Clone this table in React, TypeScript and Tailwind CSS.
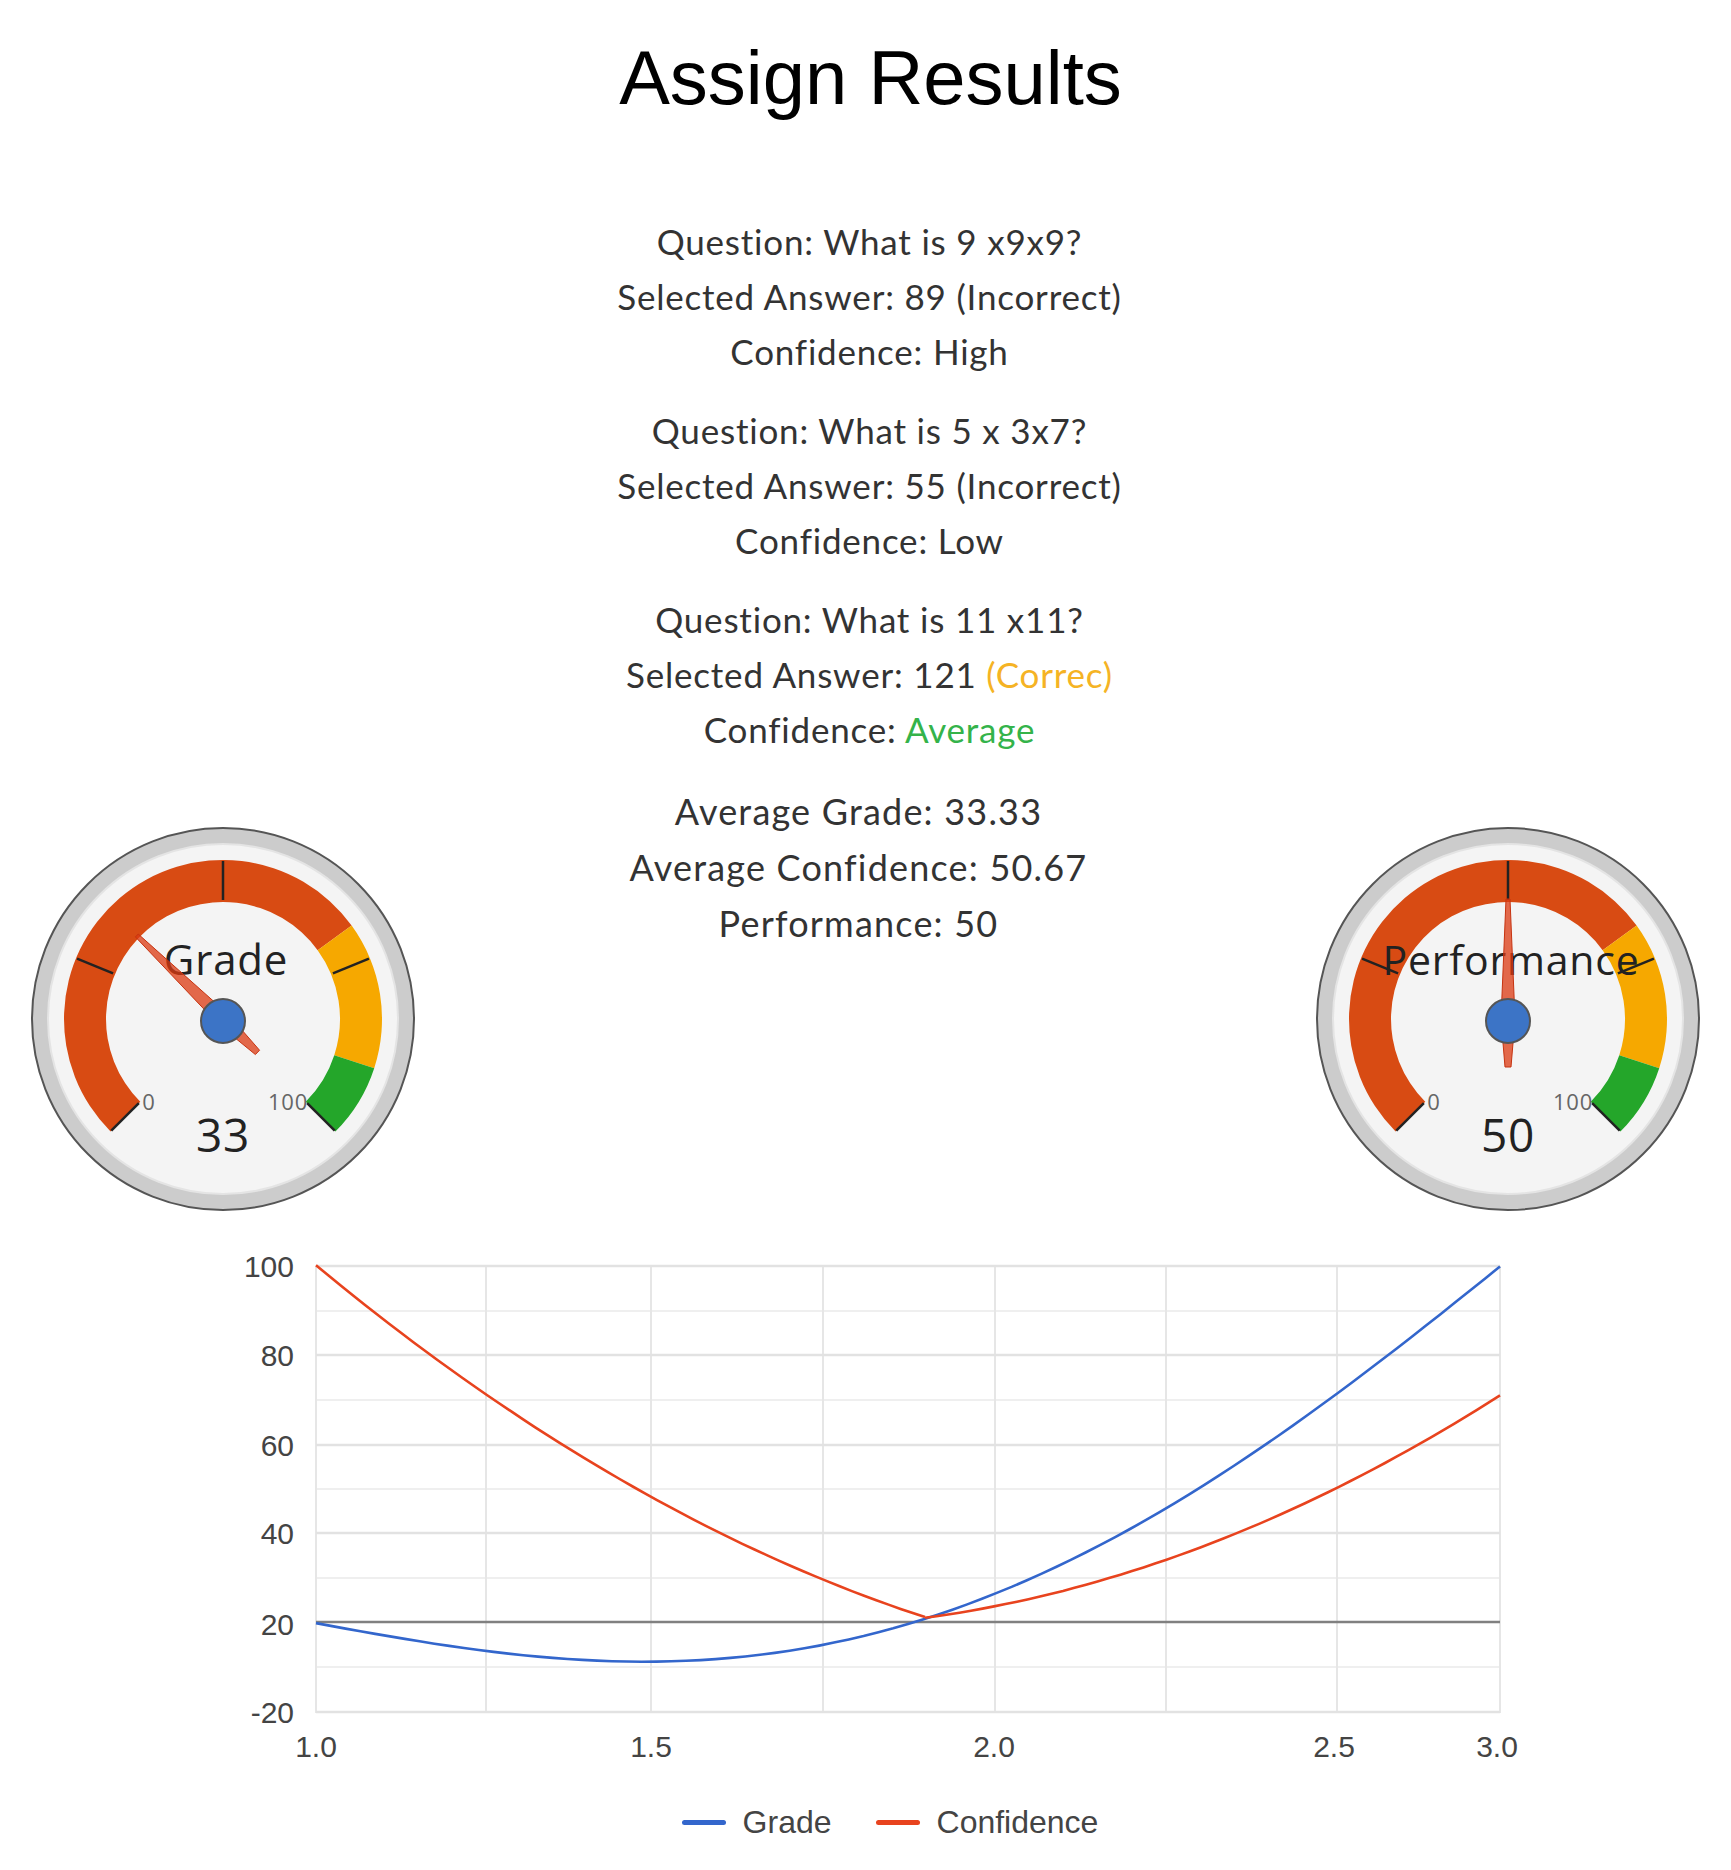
import React from "react";

type Pt = [number, number];

// least-squares polynomial fit, returns sampled path
function fitPath(pts: Pt[], deg: number, x0: number, x1: number, n = 80): string {
  const m = deg + 1;
  const sx = 1000;
  const A: number[][] = Array.from({ length: m }, () => Array(m + 1).fill(0));
  for (const [xr, y] of pts) {
    const x = xr / sx;
    for (let i = 0; i < m; i++) {
      for (let j = 0; j < m; j++) A[i][j] += Math.pow(x, i + j);
      A[i][m] += y * Math.pow(x, i);
    }
  }
  for (let c = 0; c < m; c++) {
    let piv = c;
    for (let r = c + 1; r < m; r++) if (Math.abs(A[r][c]) > Math.abs(A[piv][c])) piv = r;
    [A[c], A[piv]] = [A[piv], A[c]];
    for (let r = 0; r < m; r++) {
      if (r === c) continue;
      const f = A[r][c] / A[c][c];
      for (let k = c; k <= m; k++) A[r][k] -= f * A[c][k];
    }
  }
  const coef = A.map((row, i) => row[m] / row[i]);
  const f = (xr: number) => coef.reduce((s, c, i) => s + c * Math.pow(xr / sx, i), 0);
  let d = "";
  for (let i = 0; i <= n; i++) {
    const x = x0 + ((x1 - x0) * i) / n;
    d += (i === 0 ? "M" : " L") + x.toFixed(1) + "," + f(x).toFixed(1);
  }
  return d;
}

const C = 200;
function polar(angDeg: number, r: number): Pt {
  const a = (angDeg * Math.PI) / 180;
  return [C + r * Math.sin(a), C - r * Math.cos(a)];
}
function sector(a0: number, a1: number, r0: number, r1: number): string {
  const large = a1 - a0 > 180 ? 1 : 0;
  const o0 = polar(a0, r1);
  const o1 = polar(a1, r1);
  const i1 = polar(a1, r0);
  const i0 = polar(a0, r0);
  return `M${o0[0]},${o0[1]} A${r1},${r1} 0 ${large} 1 ${o1[0]},${o1[1]} L${i1[0]},${i1[1]} A${r0},${r0} 0 ${large} 0 ${i0[0]},${i0[1]} Z`;
}
const valToAng = (v: number) => -135 + v * 2.7;

function Gauge({ label, value }: { label: string; value: number }) {
  const th = valToAng(value);
  const local: Pt[] = [
    [-2, -120],
    [2, -120],
    [7, 0],
    [3, 48],
    [-3, 48],
    [-7, 0],
  ];
  const a = (th * Math.PI) / 180;
  const rot = local.map(([x, y]) => [
    C + x * Math.cos(a) - y * Math.sin(a),
    C + x * Math.sin(a) + y * Math.cos(a),
  ]);
  const ticks = [0, 25, 50, 75, 100].map((v) => {
    const p0 = polar(valToAng(v), 119);
    const p1 = polar(valToAng(v), 158);
    return <line key={v} x1={p0[0]} y1={p0[1]} x2={p1[0]} y2={p1[1]} stroke="#222" strokeWidth={2.5} />;
  });
  return (
    <svg width={400} height={400} viewBox="0 0 400 400" className="mt-[36px] shrink-0 block">
      <circle cx={C} cy={C} r={191} fill="#cccccc" stroke="#555" strokeWidth={2} />
      <circle cx={C} cy={C} r={175} fill="#f4f4f4" stroke="#e4e4e4" strokeWidth={2} />
      <path d={sector(valToAng(0), valToAng(70), 117, 159)} fill="#d84b13" />
      <path d={sector(valToAng(70), valToAng(90), 117, 159)} fill="#f6a800" />
      <path d={sector(valToAng(90), valToAng(100), 117, 159)} fill="#24a62a" />
      {ticks}
      <text x={203} y={156} textAnchor="middle" fontSize={label.length > 6 ? 41 : 42} fill="#222" fontFamily="'Open Sans', sans-serif">
        {label}
      </text>
      <text x={126} y={291} textAnchor="middle" fontSize={22} fill="#666" fontFamily="'Open Sans', sans-serif">
        0
      </text>
      <text x={265} y={291} textAnchor="middle" fontSize={22} fill="#666" fontFamily="'Open Sans', sans-serif">
        100
      </text>
      <text x={200} y={333} textAnchor="middle" fontSize={46} fill="#222" fontFamily="'Open Sans', sans-serif">
        {value}
      </text>
      <polygon points={rot.map((p) => p.join(",")).join(" ")} fill="#dc3912" fillOpacity={0.75} stroke="#c63310" strokeWidth={1} />
      <circle cx={C} cy={C + 2} r={22} fill="#3c74c6" stroke="#555" strokeWidth={2} />
    </svg>
  );
}

const hMajor = [1267, 1356, 1446, 1534, 1713];
const hMinor = [1312, 1401, 1490, 1579, 1668];
const vLines = [316, 486, 651, 823, 995, 1166, 1337, 1500];
const yLabels: [string, number][] = [
  ["100", 1267],
  ["80", 1356],
  ["60", 1446],
  ["40", 1534],
  ["20", 1625],
  ["-20", 1713],
];
const xLabels: [string, number][] = [
  ["1.0", 316],
  ["1.5", 651],
  ["2.0", 994],
  ["2.5", 1334],
  ["3.0", 1497],
];

const redL: Pt[] = [
  [316, 1267],
  [486, 1393],
  [651, 1500],
  [823, 1580],
  [925, 1618],
];
const redR: Pt[] = [
  [925, 1618],
  [995, 1608],
  [1166, 1562],
  [1337, 1487],
  [1500, 1397],
];
const blue: Pt[] = [
  [316, 1623],
  [400, 1641],
  [486, 1653],
  [570, 1659],
  [651, 1660],
  [740, 1658],
  [823, 1650],
  [920, 1620],
  [995, 1593],
  [1080, 1555],
  [1166, 1513],
  [1250, 1456],
  [1337, 1393],
  [1420, 1331],
  [1500, 1268],
];

function Chart() {
  return (
    <svg width={1731} height={560} viewBox="0 1220 1731 560" className="block">
      {hMinor.map((y) => (
        <line key={"m" + y} x1={316} x2={1500} y1={y} y2={y} stroke="#efefef" strokeWidth={2} />
      ))}
      {vLines.map((x) => (
        <line key={"v" + x} x1={x} x2={x} y1={1267} y2={1714} stroke="#e6e6e6" strokeWidth={2} />
      ))}
      {hMajor.map((y) => (
        <line key={"h" + y} x1={316} x2={1500} y1={y} y2={y} stroke="#e2e2e2" strokeWidth={2.5} />
      ))}
      <line x1={316} x2={1500} y1={1623} y2={1623} stroke="#808080" strokeWidth={2.5} />
      {yLabels.map(([t, y]) => (
        <text key={t} x={294} y={y + 11} textAnchor="end" fontSize={30} fill="#444" fontFamily="'Liberation Sans', Arial, sans-serif">
          {t}
        </text>
      ))}
      {xLabels.map(([t, x]) => (
        <text key={t} x={x} y={1758} textAnchor="middle" fontSize={30} fill="#444" fontFamily="'Liberation Sans', Arial, sans-serif">
          {t}
        </text>
      ))}
      <path d={fitPath(blue, 4, 316, 1500)} fill="none" stroke="#3366cc" strokeWidth={2.6} strokeLinejoin="round" />
      <path d={fitPath(redL, 2, 316, 925, 50)} fill="none" stroke="#e8431e" strokeWidth={2.6} strokeLinejoin="round" />
      <path d={fitPath(redR, 2, 925, 1500, 50)} fill="none" stroke="#e8431e" strokeWidth={2.6} strokeLinejoin="round" />
    </svg>
  );
}

function Group({ children, first }: { children: React.ReactNode; first?: boolean }) {
  return <div className={first ? "" : "mt-[24px]"}>{children}</div>;
}

export default function App() {
  return (
    <div className="w-full min-h-[1870px] bg-white text-center font-['Lato',sans-serif] text-[#333]">
      <h1 className="pt-[40px] pl-[10px] text-[76px] leading-[76px] font-normal text-black font-['Liberation_Sans',Arial,sans-serif]">
        Assign Results
      </h1>
      <div className="mt-[98px] text-[35px] tracking-[0.8px]">
        <div className="pl-[8px] leading-[55px]">
          <Group first>
            <p>Question: What is 9 x9x9?</p>
            <p>Selected Answer: 89 (Incorrect)</p>
            <p>Confidence: High</p>
          </Group>
          <Group>
            <p>Question: What is 5 x 3x7?</p>
            <p>Selected Answer: 55 (Incorrect)</p>
            <p>Confidence: Low</p>
          </Group>
          <Group>
            <p>Question: What is 11 x11?</p>
            <p>
              Selected Answer: 121 <span className="text-[#f5b324]">(Correc)</span>
            </p>
            <p>
              Confidence: <span className="text-[#34b34a]">Average</span>
            </p>
          </Group>
        </div>
        <div className="mt-[26px] flex justify-between items-start px-[23px] leading-[56px]">
          <Gauge label="Grade" value={33} />
          <div className="pr-[14px] text-[36px] tracking-[1.2px]">
            <p>Average Grade: 33.33</p>
            <p>Average Confidence: 50.67</p>
            <p>Performance: 50</p>
          </div>
          <Gauge label="Performance" value={50} />
        </div>
      </div>
      <Chart />
      <div className="mt-[25px] flex justify-center items-center pl-[49px] text-[32px] leading-[36px] text-[#444] font-['Liberation_Sans',Arial,sans-serif]">
        <span className="w-[44px] h-[5px] bg-[#3366cc] rounded-sm" />
        <span className="ml-[17px]">Grade</span>
        <span className="ml-[44px] w-[44px] h-[5px] bg-[#e8431e] rounded-sm" />
        <span className="ml-[17px]">Confidence</span>
      </div>
    </div>
  );
}
